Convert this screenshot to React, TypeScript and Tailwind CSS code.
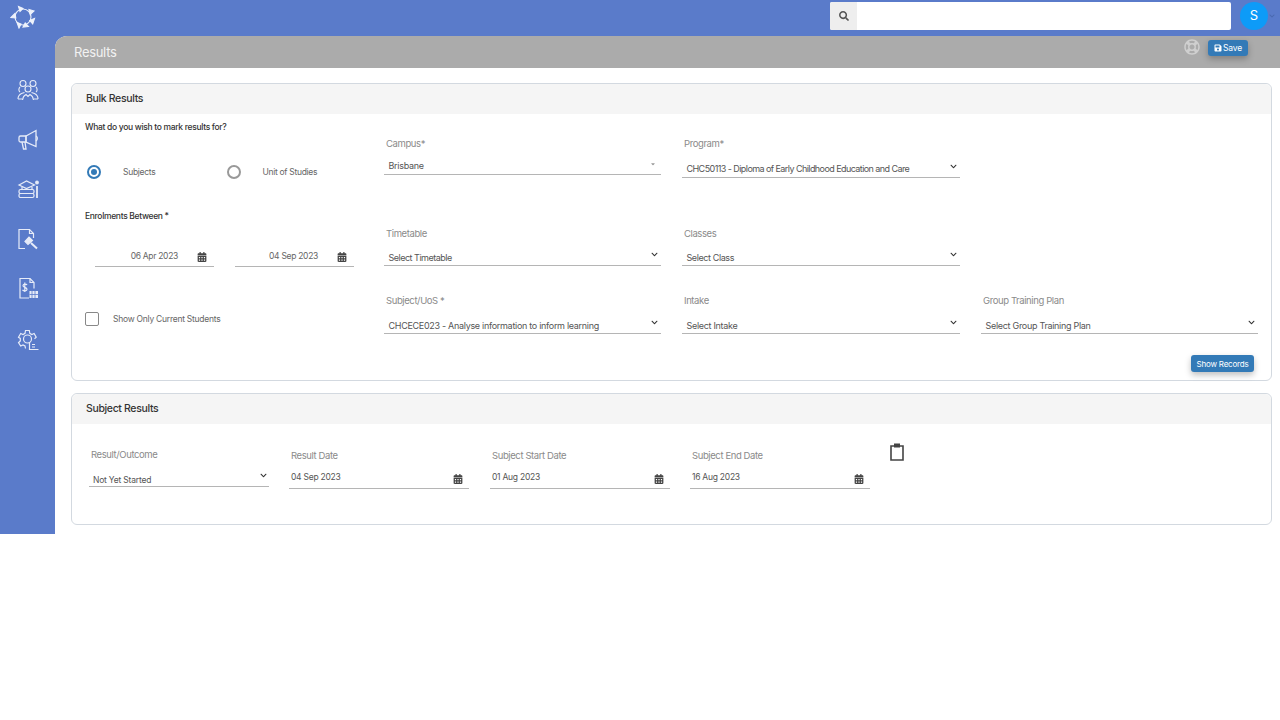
import { ReactNode } from 'react';
import { FaCalendarAlt, FaCaretDown, FaChevronDown, FaRegLifeRing, FaSave, FaSearch } from 'react-icons/fa';

function Logo() {
  return (
    <svg width="26" height="24" viewBox="0 0 26 24" fill="none" stroke="#eef2fb" strokeWidth="1.100">
      <circle cx="13" cy="12" r="8" />
      <path d="M8.500 1.500l4.500 2-3 3z" fill="#eef2fb" />
      <path d="M19 4.500l5 1.500-3.800 3.500z" fill="#eef2fb" />
      <path d="M24.500 13.500l-1.800 5.500-3-3.500z" fill="#eef2fb" />
      <path d="M18.500 21.500l-5.500.5 2.200-4z" fill="#eef2fb" />
      <path d="M9 23l-2-5.500 4 1.500z" fill="#eef2fb" />
      <path d="M1 12.500l4-4 .8 4.500z" fill="#eef2fb" />
    </svg>
  );
}

function PeopleIcon() {
  return (
    <svg width="22" height="22" viewBox="0 0 22 22" fill="none" stroke="#e6ebf8" strokeWidth="1.100">
      <circle cx="6" cy="4.500" r="3" />
      <circle cx="16" cy="4.500" r="3" />
      <circle cx="11" cy="10" r="3" />
      <path d="M3 13c-1.500-1-1.500-3.500 0-5M19 13c1.500-1 1.500-3.500 0-5" />
      <path d="M1 20c0-3 1.500-4.500 3.500-5.500l3-1M21 20c0-3-1.500-4.500-3.500-5.500l-3-1" />
      <path d="M5.500 21c.3-2.500 1.500-4.500 3.500-5.500l2 2 2-2c2 1 3.200 3 3.500 5.500" />
      <path d="M1 20h4M17 20h4" />
    </svg>
  );
}

function MegaphoneIcon() {
  return (
    <svg width="22" height="22" viewBox="0 0 22 22" fill="none" stroke="#e6ebf8" strokeWidth="1.300">
      <path d="M9 7l10-5.500v16L9 13z" />
      <path d="M9 7H3.500A1.500 1.500 0 0 0 2 8.500v3A1.500 1.500 0 0 0 3.500 13H9z" />
      <path d="M5 13l1.500 7h2.500L8 13" />
      <path d="M19 7c1.500.5 2 3.500 0 5" />
    </svg>
  );
}

function BooksIcon() {
  return (
    <svg width="22" height="22" viewBox="0 0 22 22" fill="none" stroke="#e6ebf8" strokeWidth="1.200">
      <path d="M2 7l7.500-4 8 4-8 3.500z" />
      <path d="M5 9v2.500h10V9" />
      <rect x="2" y="11.500" width="15" height="4" rx="1.500" />
      <rect x="2" y="15.500" width="15" height="4" rx="1.500" />
      <path d="M20 8v12" strokeWidth="1.800" />
      <circle cx="20" cy="4.500" r="1.300" fill="#e6ebf8" />
    </svg>
  );
}

function FileGavelIcon() {
  return (
    <svg width="22" height="22" viewBox="0 0 22 22" fill="none" stroke="#e6ebf8" strokeWidth="1.200">
      <path d="M8 20.500H2V1.500h10.500l4 4V10" />
      <path d="M12.500 1.500v4h4" />
      <path d="M8 13.500l4-4.500 3.500 3.500-4.500 4z" fill="#e6ebf8" />
      <path d="M14 15l6 5.500" strokeWidth="2" />
    </svg>
  );
}

function FileDollarIcon() {
  return (
    <svg width="22" height="22" viewBox="0 0 22 22" fill="none" stroke="#e6ebf8" strokeWidth="1.200">
      <path d="M12 21H3V1.500h10l4 4v6" />
      <path d="M13 1.500v4h4" />
      <path d="M10 8c-.5-1-3.500-1.500-4 .3-.5 2.500 4 1.500 4 4 0 2-3.500 2-4.500.5M7.800 5.500v9.500" />
      <rect x="12.500" y="14" width="8.500" height="7" fill="#e6ebf8" stroke="none" />
      <path d="M15 14v7M18 14v7M12.500 17.500H21" stroke="#5a7bca" strokeWidth=".8" />
    </svg>
  );
}

function GearDocIcon() {
  return (
    <svg width="24" height="24" viewBox="0 0 24 24" fill="none" stroke="#e6ebf8" strokeWidth="1.200">
      <path d="M9.500 21.500l-.5-2.500-2-1-2.300 1-2.200-3.300 1.800-1.700v-2.600L2.500 10.200l2.200-3.700 2.300 1 2-1.200.5-2.800h3.800l.5 2.800 2 1.200 2.300-1 2.100 3.700-1.700 1.500" />
      <circle cx="11.500" cy="12" r="4" />
      <path d="M13.500 15v7.500h9M16 17.500h3M16 20h3" />
    </svg>
  );
}

function ClipboardIcon() {
  return (
    <svg width="16" height="18" viewBox="0 0 16 18" fill="none" stroke="#444" strokeWidth="1.600">
      <path d="M5 3H2v14h12V3h-3" />
      <rect x="5.500" y="1" width="5" height="3" fill="#444" strokeWidth="1" />
    </svg>
  );
}

function Calendar() {
  return <FaCalendarAlt className="size-[10px] text-[#444]" />;
}

function Chevron() {
  return <FaChevronDown className="size-[7px] text-[#333] mb-[7px] mr-[2px]" />;
}

function FieldLabel({ children }: { children: ReactNode }) {
  return <div className="h-[14px] leading-[14px] text-[9.5px] tracking-[-0.4px] text-[#8a8a8a] pl-[2px]">{children}</div>;
}

function SelectField({ label, value, box, text = 'tracking-[-0.3px]', caret }: { label: string; value: string; box: string; text?: string; caret?: boolean }) {
  return (
    <div className="w-full">
      <FieldLabel>{label}</FieldLabel>
      <div className={`flex items-end justify-between border-b border-[#b5b5b5] pl-[4.5px] pr-[1px] ${box}`}>
        <span className={`text-[9px] leading-[14px] text-[#555] ${text}`}>{value}</span>
        {caret ? <FaCaretDown className="size-[6px] text-[#999] mb-[7px] mr-[4px]" /> : <Chevron />}
      </div>
    </div>
  );
}

function DateField({ label, value }: { label: string; value: string }) {
  return (
    <div className="w-[180px]">
      <FieldLabel>{label}</FieldLabel>
      <div className="flex h-[26px] items-end justify-between border-b border-[#b5b5b5] pl-[2px] pr-[6px]">
        <span className="text-[8.5px] leading-[14px] pb-[4px] tracking-[-0.25px] text-[#555]">{value}</span>
        <span className="pb-[4px]">
          <Calendar />
        </span>
      </div>
    </div>
  );
}

function RangeDate({ value }: { value: string }) {
  return (
    <div className="flex h-[20px] w-[119px] items-center justify-end border-b border-[#b5b5b5] pr-[7px]">
      <span className="text-[8.5px] tracking-[-0.3px] text-[#666] mr-[19px]">{value}</span>
      <Calendar />
    </div>
  );
}

function PanelHeader({ title }: { title: string }) {
  return (
    <div className="h-[30px] bg-[#f5f5f5] rounded-t-[6px] pl-[14px] flex items-center text-[10.5px] tracking-[-0.35px] font-medium text-[#333]">
      {title}
    </div>
  );
}

export default function App() {
  const navIcons = [
    <PeopleIcon key="people" />,
    <MegaphoneIcon key="campaign" />,
    <BooksIcon key="books" />,
    <FileGavelIcon key="gavel" />,
    <FileDollarIcon key="dollar" />,
    <GearDocIcon key="gear" />,
  ];

  return (
    <div className="min-h-screen bg-white font-['Inter',sans-serif]">
      <div className="h-[534px] bg-[#5a7bca] flex flex-col">
        {/* Top bar */}
        <div className="h-[36px] flex items-center shrink-0">
          <div className="pl-[10px] pb-[2px]">
            <Logo />
          </div>
          <div className="ml-auto flex items-center pb-[5px]">
            <div className="w-[401px] h-[28px] bg-white rounded-[2px] flex overflow-hidden">
              <div className="w-[27px] bg-[#eeeeee] flex items-center justify-center">
                <FaSearch className="size-[10px] text-[#555]" />
              </div>
            </div>
            <div className="ml-[9px] size-[28px] rounded-full bg-[#0d9bf8] text-white text-[13px] flex items-center justify-center">
              S
            </div>
            <FaChevronDown className="ml-[1px] mr-[5px] size-[6px] text-[#4a6ab0]" />
          </div>
        </div>

        <div className="flex-1 flex min-h-0">
          {/* Sidebar */}
          <div className="w-[55px] shrink-0 flex flex-col items-center gap-[27.5px] pt-[43px]">
            {navIcons}
          </div>

          {/* Main */}
          <div className="flex-1 bg-white rounded-tl-[12px]">
            <div className="h-[32px] bg-[#ababab] rounded-tl-[12px] flex items-center pl-[19px] pr-[32px]">
              <span className="pt-[1px] text-[13px] tracking-[-0.3px] text-[#f2f2f2]">Results</span>
              <FaRegLifeRing className="ml-auto mr-[8px] mb-[10px] size-[16px] text-[#cfcfcf]" />
              <button className="mb-[8px] w-[40px] h-[16px] rounded-[3px] bg-[#337ab7] text-white text-[8.5px] tracking-[-0.2px] flex items-center justify-center gap-[1px] shadow-[0_3px_6px_rgba(0,0,0,0.25)]">
                <FaSave className="size-[8px]" />
                Save
              </button>
            </div>

            <div className="pl-[16px] pr-[8px] pt-[15px]">
              {/* Bulk Results */}
              <div className="border border-[#d3d9e0] rounded-[6px]">
                <PanelHeader title="Bulk Results" />
                <div className="pl-[13px] pr-[13px] pt-[6px]">
                  <div className="grid grid-cols-[278px_277px_278px_277px] gap-x-[21px] h-[87px]">
                    <div>
                      <div className="h-[14px] leading-[14px] text-[8.5px] tracking-[-0.32px] font-medium text-[#333]">What do you wish to mark results for?</div>
                      <div className="mt-[31px] flex items-center text-[8.5px] tracking-[-0.3px] text-[#666]">
                        <span className="ml-[2px] size-[14px] rounded-full border-2 border-[#337ab7] flex items-center justify-center">
                          <span className="size-[6px] rounded-full bg-[#337ab7]" />
                        </span>
                        <span className="ml-[22px] w-[103.5px]">Subjects</span>
                        <span className="size-[14px] rounded-full border-2 border-[#999]" />
                        <span className="ml-[22px]">Unit of Studies</span>
                      </div>
                    </div>
                    <div className="mt-[17px]">
                      <SelectField label="Campus*" value="Brisbane" box="h-[24px]" text="pb-[1px] tracking-[-0.3px]" caret />
                    </div>
                    <div className="mt-[17px]">
                      <SelectField
                        label="Program*"
                        value="CHC50113 - Diploma of Early Childhood Education and Care"
                        box="h-[27px]"
                        text="pb-[1px] tracking-[-0.57px]"
                      />
                    </div>
                  </div>

                  <div className="grid grid-cols-[278px_277px_278px_277px] gap-x-[21px] h-[79px]">
                    <div>
                      <div className="mt-[2px] h-[14px] leading-[14px] text-[8.5px] tracking-[-0.33px] font-medium text-[#333]">Enrolments Between *</div>
                      <div className="mt-[24px] ml-[10px] flex gap-[21px]">
                        <RangeDate value="06 Apr 2023" />
                        <RangeDate value="04 Sep 2023" />
                      </div>
                    </div>
                    <div className="mt-[20px]">
                      <SelectField label="Timetable" value="Select Timetable" box="h-[25px]" text="tracking-[-0.5px]" />
                    </div>
                    <div className="mt-[20px]">
                      <SelectField label="Classes" value="Select Class" box="h-[25px]" text="tracking-[-0.4px]" />
                    </div>
                  </div>

                  <div className="grid grid-cols-[278px_277px_278px_277px] gap-x-[21px] h-[60px]">
                    <div className="mt-[26px] h-[14px] flex items-center">
                      <span className="size-[14px] rounded-[2px] border border-[#888]" />
                      <span className="ml-[14px] text-[8.5px] tracking-[-0.25px] text-[#666]">Show Only Current Students</span>
                    </div>
                    <div className="mt-[8px]">
                      <SelectField label="Subject/UoS *" value="CHCECE023 - Analyse information to inform learning" box="h-[26px]" />
                    </div>
                    <div className="mt-[8px]">
                      <SelectField label="Intake" value="Select Intake" box="h-[26px]" />
                    </div>
                    <div className="mt-[8px]">
                      <SelectField label="Group Training Plan" value="Select Group Training Plan" box="h-[26px]" />
                    </div>
                  </div>

                  <div className="flex justify-end pr-[4px] pt-[9px] pb-[8px]">
                    <button className="w-[63px] h-[17px] rounded-[3px] bg-[#337ab7] text-white text-[8px] tracking-[-0.2px] flex items-center justify-center shadow-[0_3px_6px_rgba(0,0,0,0.25)]">
                      Show Records
                    </button>
                  </div>
                </div>
              </div>

              {/* Subject Results */}
              <div className="mt-[12px] border border-[#d3d9e0] rounded-[6px] h-[132px]">
                <PanelHeader title="Subject Results" />
                <div className="pl-[17px] pt-[24px] flex gap-x-[20px] items-start">
                  <div className="w-[180px]">
                    <FieldLabel>Result/Outcome</FieldLabel>
                    <div className="flex h-[25px] items-end justify-between border-b border-[#b5b5b5] pl-[4px]">
                      <span className="text-[8.5px] leading-[12px] tracking-[-0.2px] text-[#555]">Not Yet Started</span>
                      <Chevron />
                    </div>
                  </div>
                  <div className="mt-[1px]">
                    <DateField label="Result Date" value="04 Sep 2023" />
                  </div>
                  <div className="mt-[1px] ml-[1px]">
                    <DateField label="Subject Start Date" value="01 Aug 2023" />
                  </div>
                  <div className="mt-[1px]">
                    <DateField label="Subject End Date" value="16 Aug 2023" />
                  </div>
                  <div className="ml-[-1px] mt-[-5px]">
                    <ClipboardIcon />
                  </div>
                </div>
              </div>
            </div>
          </div>
        </div>
      </div>
    </div>
  );
}
